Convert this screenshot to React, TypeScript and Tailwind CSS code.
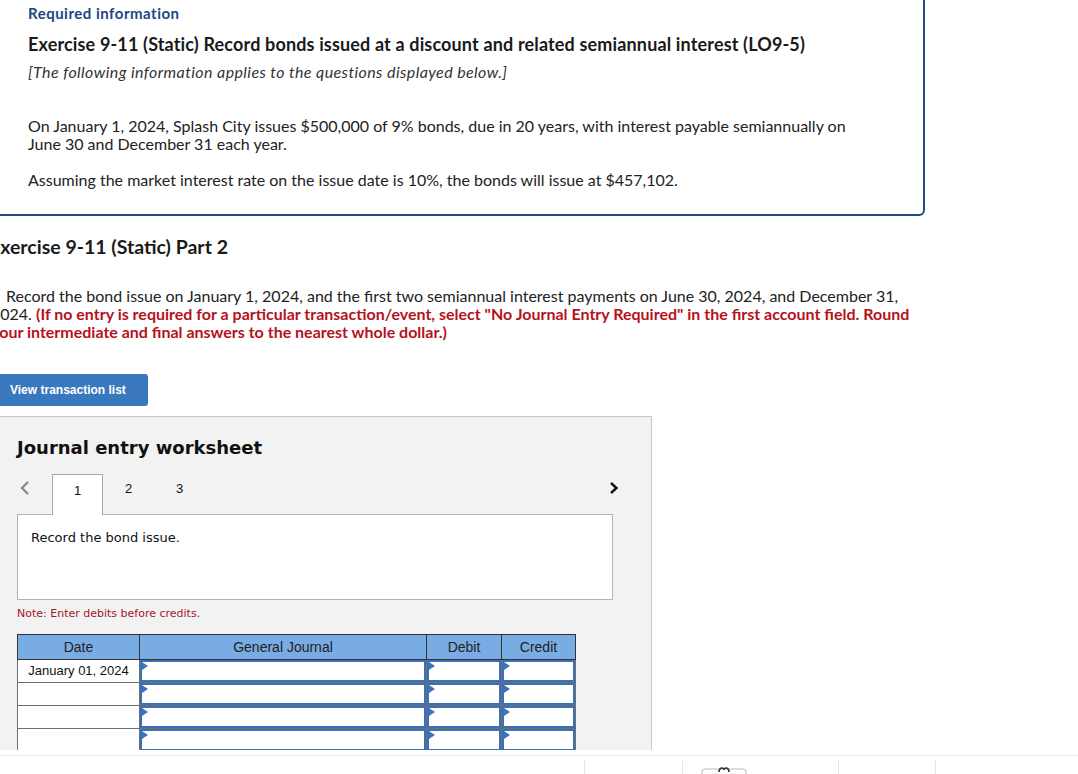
import React from "react";

const proxima = { fontFamily: "Lato, 'Open Sans', sans-serif" };

function Chevron({ dir, className }: { dir: "left" | "right"; className?: string }) {
  return (
    <svg width="12" height="16" viewBox="0 0 12 16" className={className}>
      {dir === "left" ? (
        <path d="M9 2 L3 8 L9 14" fill="none" stroke="currentColor" strokeWidth="2.2" />
      ) : (
        <path d="M3 3 L8.5 8 L3 13" fill="none" stroke="currentColor" strokeWidth="2.4" />
      )}
    </svg>
  );
}

function Tri() {
  return (
    <svg width="6" height="8" viewBox="0 0 6 8" className="absolute left-[0px] top-[0px]">
      <path d="M0 0 L6 4 L0 8 Z" fill="#3b74bf" />
    </svg>
  );
}

function InputCell({ w }: { w: string }) {
  return (
    <div className={`${w} h-full border-l border-[#6f6f6f] p-0`}>
      <div className="relative w-full h-full border-2 border-[#3a70b6] bg-white">
        <Tri />
      </div>
    </div>
  );
}

const arial = { fontFamily: "'Liberation Sans', Arial, sans-serif" };

export default function App() {
  const rows = ["January 01, 2024", "", "", ""];
  return (
    <div className="w-[1078px] h-[774px] overflow-hidden bg-white flex flex-col">
      <div className="h-[750px] overflow-hidden shrink-0">
        {/* Required information box */}
        <div
          className="w-[925px] h-[216px] border-r-2 border-b-2 border-[#1d4c88] rounded-br-[6px] pl-[28px] pt-[3px]"
          style={proxima}
        >
          <div className="text-[15px] font-bold tracking-[0.5px] text-[#1d4585] leading-[20px]">Required information</div>
          <div className="mt-[10px] text-[18px] font-bold tracking-[0.15px] text-[#1a1a1a] leading-[22px]">
            Exercise 9-11 (Static) Record bonds issued at a discount and related semiannual interest (LO9-5)
          </div>
          <div className="mt-[7px] text-[16px] italic tracking-[0.4px] text-[#333] leading-[20px]">
            [The following information applies to the questions displayed below.]
          </div>
          <div className="mt-[35px] text-[16px] text-[#222] leading-[18px]">
            On January 1, 2024, Splash City issues $500,000 of 9% bonds, due in 20 years, with interest payable semiannually on
            <br />
            June 30 and December 31 each year.
          </div>
          <div className="mt-[18px] text-[16px] text-[#222] leading-[18px]">
            Assuming the market interest rate on the issue date is 10%, the bonds will issue at $457,102.
          </div>
        </div>

        {/* Part 2 */}
        <div className="ml-[-11px] mt-[19px] text-[19.5px] font-bold text-[#1a1a1a] leading-[24px]" style={proxima}>
          Exercise 9-11 (Static) Part 2
        </div>
        <div className="ml-[-9px] mt-[28px] text-[16px] leading-[18px] text-[#222]" style={proxima}>
          <span className="pl-[15px]">Record the bond issue on January 1, 2024, and the first two semiannual interest payments on June 30, 2024, and December 31,</span>
          <br />
          2024.{" "}
          <span className="font-bold text-[#b5121b]">
            (If no entry is required for a particular transaction/event, select "No Journal Entry Required" in the first account field. Round
            <br />
            your intermediate and final answers to the nearest whole dollar.)
          </span>
        </div>

        {/* Button */}
        <div className="mt-[33px] w-[148px] h-[32px] bg-[#3a78bd] rounded-r-[3px] flex items-center pl-[10px]">
          <span className="text-white text-[12px] font-bold" style={arial}>
            View transaction list
          </span>
        </div>

        {/* Worksheet panel */}
        <div
          className="mt-[10px] w-[652px] h-[400px] bg-[#f2f2f2] border-t border-r border-[#c6c6c6] pl-[17px] pt-[19px]"
          style={{ fontFamily: "'DejaVu Sans', Verdana, sans-serif" }}
        >
          <div className="text-[18px] font-bold text-[#111] leading-[24px]">Journal entry worksheet</div>
          <div className="mt-[13px] flex items-end h-[41px] w-[595px] relative">
            <div className="w-[35px] h-full flex items-start pt-[7px] pl-[2px] text-[#888]">
              <Chevron dir="left" />
            </div>
            <div
              className="w-[51px] h-[41px] bg-white border border-b-0 border-[#a9a9a9] flex items-start pt-[6px] justify-center text-[13px] text-[#111] relative top-[1px] z-10"
              style={arial}
            >
              1
            </div>
            <div className="w-[51px] h-full flex items-start pt-[6px] justify-center text-[13px] text-[#111]" style={arial}>2</div>
            <div className="w-[51px] h-full flex items-start pt-[6px] justify-center text-[13px] text-[#111]" style={arial}>3</div>
            <div className="flex-1 h-full flex items-start pt-[7px] justify-end text-[#111]">
              <Chevron dir="right" className="mr-[-8px]" />
            </div>
          </div>
          <div className="w-[596px] h-[86px] bg-white border border-[#b3b3b3] pl-[13px] pt-[13px] text-[13px] text-[#111]">
            Record the bond issue.
          </div>
          <div className="mt-[7px] text-[11px] text-[#a3162b] leading-[14px]">Note: Enter debits before credits.</div>

          {/* Table */}
          <div className="mt-[13px] w-[559px]" style={arial}>
            <div className="flex h-[26px] bg-[#79ace4] border border-[#333] text-[14px] text-[#222]">
              <div className="w-[121px] flex items-center justify-center">Date</div>
              <div className="w-[287px] border-l border-[#333] flex items-center justify-center">General Journal</div>
              <div className="w-[75px] border-l border-[#333] flex items-center justify-center">Debit</div>
              <div className="flex-1 border-l border-[#333] flex items-center justify-center">Credit</div>
            </div>
            {rows.map((d, i) => (
              <div key={i} className="flex h-[23px] border-l border-r border-b border-[#6f6f6f] bg-white">
                <div className="w-[121px] flex items-center justify-center text-[13px] text-[#111]">{d}</div>
                <InputCell w="w-[287px]" />
                <InputCell w="w-[75px]" />
                <InputCell w="flex-1" />
              </div>
            ))}
          </div>
        </div>
      </div>

      {/* Footer */}
      <div className="flex-1 pt-[5px]">
        <div className="border-t border-[#ececec] h-full flex pt-[5px]">
          <div className="w-[584px] h-full" />
          <div className="w-[98px] h-full border-l border-[#e6e6e6]" />
          <div className="w-[156px] h-full border-l border-[#e6e6e6] relative">
            <svg width="46" height="14" viewBox="0 0 46 14" className="absolute left-[18px] top-[3px]">
              <rect x="1" y="5" width="44" height="12" rx="3" fill="none" stroke="#bbb" strokeWidth="1" />
              <path d="M18 8 C18 3 23 3 23 6 C23 3 28 3 28 8" fill="none" stroke="#333" strokeWidth="1.6" />
            </svg>
          </div>
          <div className="w-[97px] h-full border-l border-[#e6e6e6]" />
          <div className="flex-1 h-full border-l border-[#e6e6e6]" />
        </div>
      </div>
    </div>
  );
}
